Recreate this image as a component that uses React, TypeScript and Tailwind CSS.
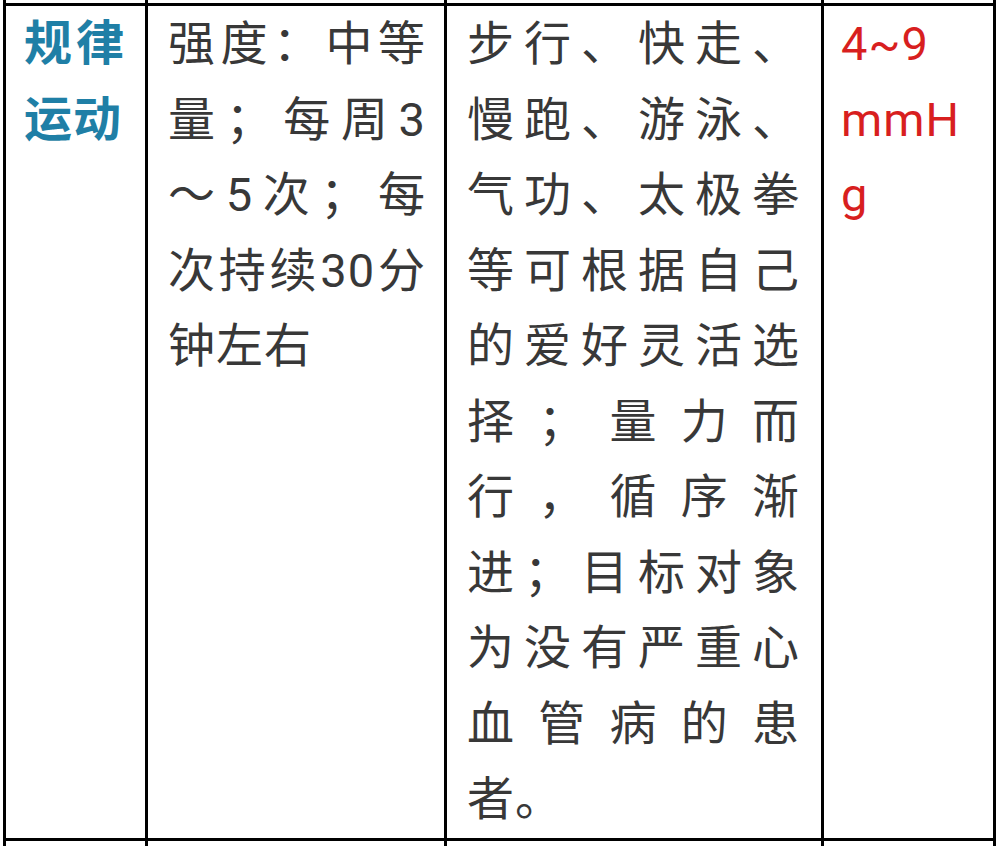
import React from "react";

const cols = "grid grid-cols-[142px_299px_377px_172px]";
const cell = "border-r-[3px] border-black";
const text =
  "font-[Roboto,'Noto_Sans_CJK_SC',sans-serif] text-[47px] leading-[75.5px] tracking-[1px] text-justify";

export default function App() {
  return (
    <div className="h-[846px] w-full overflow-hidden bg-white">
      <div className="ml-[3px] w-[993px] border-l-[3px] border-black">
        {/* sliver of the previous row */}
        <div className={`${cols} h-[3px]`}>
          <div className={cell} />
          <div className={cell} />
          <div className={cell} />
          <div className={cell} />
        </div>

        <div className={`${cols} h-[838px] border-y-[3px] border-black`}>
          <div className={`${cell} pl-[18px] pr-[20px]`}>
            <p className={`${text} text-[48px] font-bold text-[#1f7fa6]`}>规律运动</p>
          </div>
          <div className={`${cell} pl-[20px] pr-[18px]`}>
            <p className={`${text} text-[#383838]`}>
              强度：中等量；每周3～5次；每次持续30分钟左右
            </p>
          </div>
          <div className={`${cell} pl-[20px] pr-[21px]`}>
            <p className={`${text} text-[#383838]`}>
              步行、快走、慢跑、游泳、气功、太极拳等可根据自己的爱好灵活选择；量力而行，循序渐进；目标对象为没有严重心血管病的患者。
            </p>
          </div>
          <div className={`${cell} pl-[17px] pr-[28px]`}>
            <p className={`${text} break-all text-left text-[#d81f1f]`}>4~9mmHg</p>
          </div>
        </div>

        {/* start of the next row */}
        <div className={`${cols} h-[40px]`}>
          <div className={cell} />
          <div className={cell} />
          <div className={cell} />
          <div className={cell} />
        </div>
      </div>
    </div>
  );
}
